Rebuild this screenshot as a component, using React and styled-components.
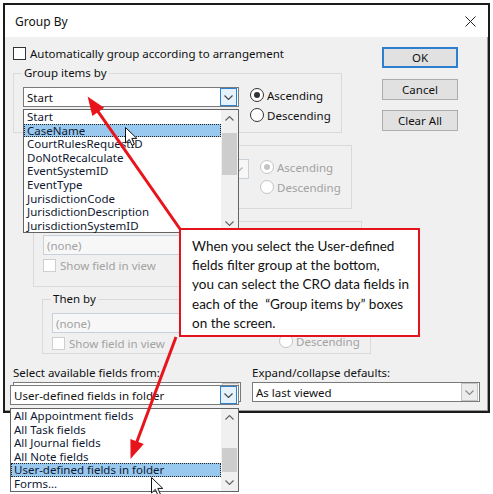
import styled, { createGlobalStyle } from 'styled-components';

const GlobalStyle = createGlobalStyle`
  html, body { margin: 0; padding: 0; background: #fff; }
  body {
    font-family: 'Noto Sans', 'Open Sans', sans-serif;
    font-size: 11.5px;
    color: #111;
  }
  * { box-sizing: border-box; }
`;

const Page = styled.div`
  position: relative;
  width: 493px;
  height: 494px;
  padding: 3px 0 0 3px;
  overflow: hidden;
  background: #fff;
`;

const Dialog = styled.div`
  width: 487px;
  height: 410px;
  border: 2px solid #1b1b1b;
  box-shadow: inset -1px -1px 0 #9a9a9a;
  display: flex;
  flex-direction: column;
  background: #f0f0f0;
`;

const TitleBar = styled.div`
  height: 32px;
  background: #fff;
  display: flex;
  align-items: center;
  justify-content: space-between;
  padding: 0 12px 0 10px;
  font-size: 12px;
`;

const Body = styled.div`
  flex: 1;
  padding: 10px 8px 0 8px;
  display: flex;
  flex-direction: column;
`;

const TopArea = styled.div`
  display: flex;
  gap: 12px;
  align-items: flex-start;
`;

const LeftCol = styled.div`
  width: 357px;
  display: flex;
  flex-direction: column;
`;

const CheckRow = styled.label`
  display: flex;
  align-items: center;
  gap: 4px;
  height: 13px;
  line-height: 13px;
  margin-top: ${p => p.$mt || 0}px;
  color: ${p => (p.$disabled ? '#a2a2a2' : '#111')};
`;

const Box = styled.span`
  width: 13px;
  height: 13px;
  background: #fff;
  border: 1px solid ${p => (p.$disabled ? '#cfcfcf' : '#333')};
`;

const Group = styled.fieldset`
  margin: ${p => p.$mt}px 0 0 ${p => p.$indent}px;
  width: 329px;
  height: ${p => p.$h + 7}px;
  padding: 0;
  border: 1px solid #dadada;
  min-width: 0;
`;

const Legend = styled.legend`
  margin-left: 8px;
  padding: 0 2px;
  line-height: 14px;
  font-size: 11.5px;
  color: #111;
`;

const GroupBody = styled.div`
  display: flex;
  gap: 11px;
  padding-left: 9px;
`;

const FieldCol = styled.div`
  width: 216px;
  display: flex;
  flex-direction: column;
`;

const Combo = styled.div`
  height: 20px;
  margin-top: ${p => p.$mt || 0}px;
  width: 100%;
  display: flex;
  align-items: center;
  justify-content: space-between;
  background: ${p => (p.$disabled ? '#f7f7f7' : '#fff')};
  border: 1px solid ${p => (p.$disabled ? '#c8d0da' : '#7a7a7a')};
  padding: 0 1px 0 3px;
  color: ${p => (p.$disabled ? '#a2a2a2' : '#111')};
  white-space: nowrap;
`;

const DropBtn = styled.span`
  width: 17px;
  height: 18px;
  display: flex;
  align-items: center;
  justify-content: center;
  border: 1px solid ${p => (p.$active ? '#2d7fd0' : p.$disabled ? 'transparent' : '#c4c4c4')};
  background: ${p => (p.$active ? '#e5f1fb' : p.$disabled ? 'transparent' : '#ececec')};
`;

const RadioCol = styled.div`
  margin-top: 5px;
  display: flex;
  flex-direction: column;
`;

const RadioRow = styled.div`
  height: 20px;
  display: flex;
  align-items: center;
  gap: 3px;
  color: ${p => (p.$disabled ? '#a2a2a2' : '#111')};
`;

const RadioDot = styled.span`
  width: 14px;
  height: 14px;
  border-radius: 50%;
  background: #fff;
  border: 1px solid ${p => (p.$disabled ? '#c4c4c4' : '#333')};
  display: flex;
  align-items: center;
  justify-content: center;
  &::after {
    content: '';
    width: 6px;
    height: 6px;
    border-radius: 50%;
    background: ${p => (p.$disabled ? '#c4c4c4' : '#333')};
    display: ${p => (p.$on ? 'block' : 'none')};
  }
`;

const ButtonCol = styled.div`
  width: 76px;
  display: flex;
  flex-direction: column;
  gap: 10.5px;
`;

const Button = styled.div`
  height: 21px;
  display: flex;
  align-items: center;
  justify-content: center;
  background: #e1e1e1;
  border: ${p => (p.$default ? '2px solid #2d7fd0' : '1px solid #adadad')};
`;

const BottomRow = styled.div`
  margin-top: 12px;
  display: flex;
  gap: 11px;
`;

const BottomField = styled.div`
  width: 228px;
  flex-shrink: 0;
  display: flex;
  flex-direction: column;
  line-height: 13px;
`;

/* ---- overlays: opened drop-down lists, callout, arrows ---- */

const DropList = styled.div`
  position: absolute;
  left: ${p => p.$x}px;
  top: ${p => p.$y}px;
  width: ${p => p.$w}px;
  border: 1px solid #646464;
  background: #fff;
  display: flex;
`;

const Items = styled.div`
  flex: 1;
  display: flex;
  flex-direction: column;
`;

const Item = styled.div`
  height: 13.6px;
  line-height: 13.6px;
  padding-left: 3px;
  white-space: nowrap;
  color: #101830;
  background: ${p => (p.$sel ? '#99c9ef' : 'transparent')};
  outline: ${p => (p.$sel ? '1px dotted #222' : 'none')};
  outline-offset: -1px;
`;

const Scroll = styled.div`
  width: 17px;
  background: #f0f0f0;
  display: flex;
  flex-direction: column;
`;

const ScrollBtn = styled.div`
  height: 17px;
  display: flex;
  align-items: center;
  justify-content: center;
`;

const Track = styled.div`
  flex: 1;
`;

const Thumb = styled.div`
  margin: ${p => p.$off}px 1px 0;
  height: ${p => p.$h}px;
  background: #cdcdcd;
`;

const OpenCombo = styled(Combo)`
  position: absolute;
  left: 10px;
  top: 385px;
  width: 229px;
  border-color: #7a7a7a;
`;

const Callout = styled.div`
  position: absolute;
  left: 179px;
  top: 228px;
  width: 241px;
  height: 109px;
  border: 2px solid #e3121b;
  background: #fff;
  padding: 7px 0 0 11px;
  font-family: Lato, 'Open Sans', sans-serif;
  font-size: 13.5px;
  line-height: 19.2px;
  color: #111;
  white-space: pre;
`;

const Overlay = styled.svg`
  position: absolute;
  left: 0;
  top: 0;
  pointer-events: none;
`;

const Chevron = ({ up, color = '#444' }) => (
  <svg width="9" height="5" viewBox="0 0 9 5">
    <polyline
      points={up ? '0.5,4.5 4.5,0.5 8.5,4.5' : '0.5,0.5 4.5,4.5 8.5,0.5'}
      fill="none"
      stroke={color}
      strokeWidth="1.1"
    />
  </svg>
);

const Cursor = ({ x, y }) => (
  <g transform={`translate(${x} ${y})`}>
    <path
      d="M0.5 0.5 L0.5 16 L4.3 12.4 L7 18.3 L9.4 17.2 L6.8 11.4 L11.8 11.4 Z"
      fill="#fff"
      stroke="#111"
      strokeWidth="1"
      strokeLinejoin="round"
    />
  </g>
);

const groups = [
  { legend: 'Group items by', indent: 0, h: 60, mt: 6, value: 'Start', on: true },
  { legend: 'Then by', indent: 10, h: 64, mt: 5, value: '(none)' },
  { legend: 'Then by', indent: 20, h: 66, mt: 5, value: '(none)' },
  { legend: 'Then by', indent: 29, h: 55, mt: 5, value: '(none)' },
];

const fieldNames = [
  'Start',
  'CaseName',
  'CourtRulesRequestID',
  'DoNotRecalculate',
  'EventSystemID',
  'EventType',
  'JurisdictionCode',
  'JurisdictionDescription',
  'JurisdictionSystemID',
];

const fieldSets = [
  'All Appointment fields',
  'All Task fields',
  'All Journal fields',
  'All Note fields',
  'User-defined fields in folder',
  'Forms...',
];

function SortGroup({ g }) {
  const off = !g.on;
  return (
    <Group $indent={g.indent} $h={g.h} $mt={g.mt}>
      <Legend>{g.legend}</Legend>
      <GroupBody>
        <FieldCol>
          <Combo $mt={7} $disabled={off}>
            {g.value}
            <DropBtn $active={g.on} $disabled={off}>
              <Chevron color={off ? '#b0b0b0' : '#444'} />
            </DropBtn>
          </Combo>
          <CheckRow $mt={4} $disabled={off}>
            <Box $disabled={off} />
            Show field in view
          </CheckRow>
        </FieldCol>
        <RadioCol>
          <RadioRow $disabled={off}>
            <RadioDot $on $disabled={off} />
            Ascending
          </RadioRow>
          <RadioRow $disabled={off}>
            <RadioDot $disabled={off} />
            Descending
          </RadioRow>
        </RadioCol>
      </GroupBody>
    </Group>
  );
}

function ListScroll({ thumbOff, thumbH }) {
  return (
    <Scroll>
      <ScrollBtn>
        <Chevron up color="#606060" />
      </ScrollBtn>
      <Track>
        <Thumb $off={thumbOff} $h={thumbH} />
      </Track>
      <ScrollBtn>
        <Chevron color="#606060" />
      </ScrollBtn>
    </Scroll>
  );
}

export default function App() {
  return (
    <Page>
      <GlobalStyle />
      <Dialog>
        <TitleBar>
          Group By
          <svg width="11" height="11" viewBox="0 0 11 11">
            <path d="M0.5 0.5 L10.5 10.5 M10.5 0.5 L0.5 10.5" stroke="#222" strokeWidth="1" />
          </svg>
        </TitleBar>
        <Body>
          <TopArea>
            <LeftCol>
              <CheckRow>
                <Box />
                Automatically group according to arrangement
              </CheckRow>
              {groups.map((g, i) => (
                <SortGroup key={i} g={g} />
              ))}
            </LeftCol>
            <ButtonCol>
              <Button $default>OK</Button>
              <Button>Cancel</Button>
              <Button>Clear All</Button>
            </ButtonCol>
          </TopArea>
          <BottomRow>
            <BottomField>
              Select available fields from:
              <Combo $mt={3}>
                User-defined fields in folder
                <DropBtn>
                  <Chevron color="#888" />
                </DropBtn>
              </Combo>
            </BottomField>
            <BottomField>
              Expand/collapse defaults:
              <Combo $mt={3}>
                As last viewed
                <DropBtn>
                  <Chevron color="#888" />
                </DropBtn>
              </Combo>
            </BottomField>
          </BottomRow>
        </Body>
      </Dialog>

      <DropList $x={23} $y={109} $w={216}>
        <Items>
          {fieldNames.map(n => (
            <Item key={n} $sel={n === 'CaseName'}>
              {n}
            </Item>
          ))}
        </Items>
        <ListScroll thumbOff={6} thumbH={42} />
      </DropList>

      <OpenCombo>
        User-defined fields in folder
        <DropBtn $active>
          <Chevron />
        </DropBtn>
      </OpenCombo>
      <DropList $x={10} $y={408} $w={229}>
        <Items>
          {fieldSets.map(n => (
            <Item key={n} $sel={n === 'User-defined fields in folder'}>
              {n}
            </Item>
          ))}
        </Items>
        <ListScroll thumbOff={22} thumbH={24} />
      </DropList>

      <Callout>
        {'When you select the User-defined\nfields filter group at the bottom,\nyou can select the CRO data fields in\neach of the  \u201cGroup items by\u201d boxes\non the screen.'}
      </Callout>

      <Overlay width="493" height="494" viewBox="0 0 493 494">
        <Cursor x={125} y={127} />
        <Cursor x={151} y={477} />
        <g stroke="#e8141b" strokeWidth="3" fill="#e8141b">
          <line x1="180" y1="229" x2="97.4" y2="110.7" />
          <polygon points="90,100 101.5,107.8 93.3,113.5" />
          <line x1="176" y1="337" x2="136.5" y2="442.8" />
          <polygon points="132,455 141.2,444.6 131.9,441.1" />
        </g>
      </Overlay>
    </Page>
  );
}
